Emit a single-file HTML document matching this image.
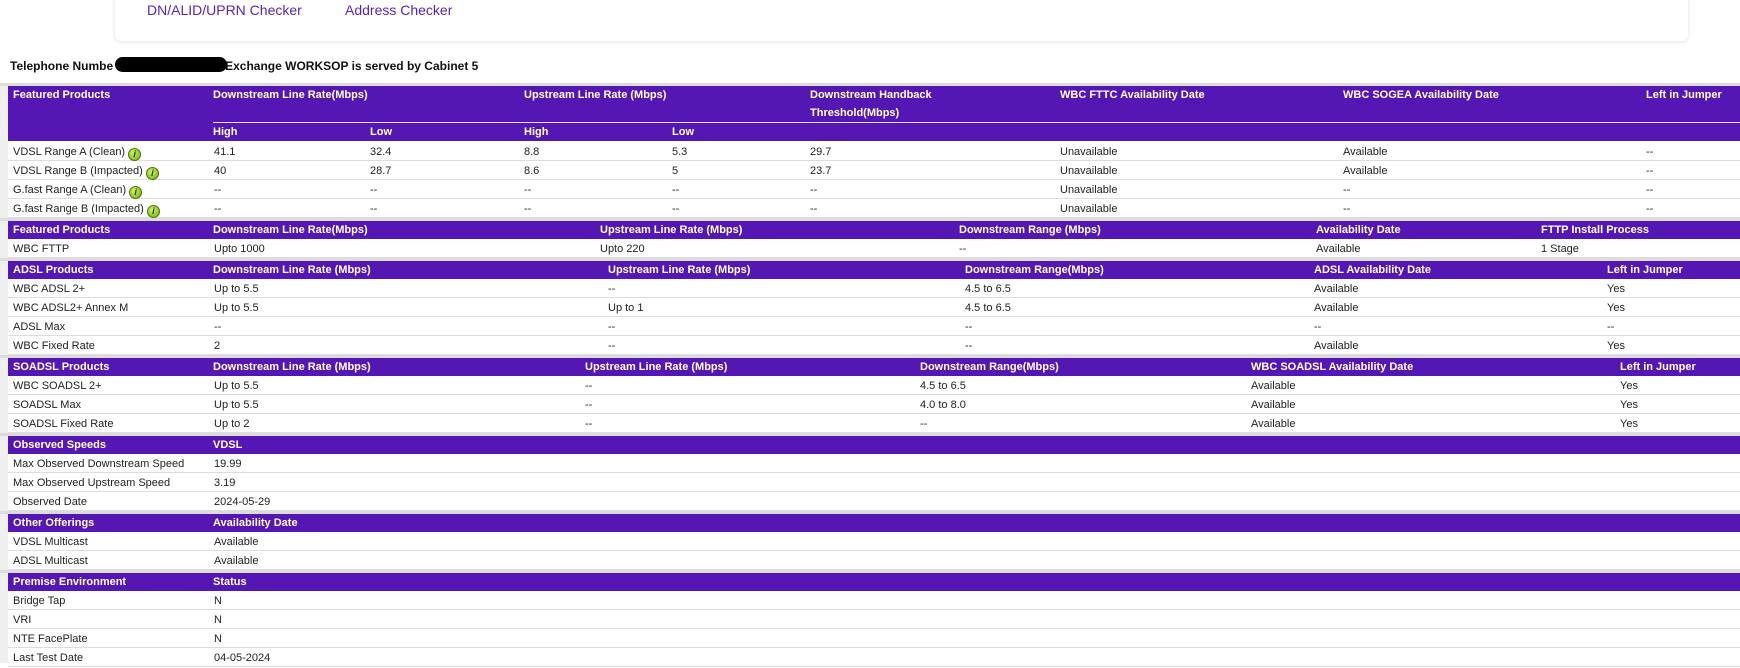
<!DOCTYPE html>
<html><head><meta charset="utf-8"><style>
*{margin:0;padding:0;box-sizing:border-box}
body{width:1740px;height:655px;overflow:hidden;background:#fff;font-family:"Liberation Sans",Arial,sans-serif;font-size:11px;color:#222;position:relative}
.card{position:absolute;left:115px;top:-10px;width:1573px;height:51px;background:#fff;border-radius:6px;box-shadow:0 1px 4px rgba(0,0,0,.12)}
.lnk{position:absolute;top:1px;font-size:14px;color:#5a1fc0;line-height:18px}
.tel{position:absolute;left:10px;top:58px;font-size:12px;font-weight:bold;color:#111;line-height:16px}
.blob{position:absolute;left:115px;top:57px;width:112px;height:15px;background:#000;border-radius:8px}
.strip{position:absolute;left:0;top:83px;width:8px;height:580px;background:#efefef}
.g{position:absolute;left:0;right:0;height:3px;background:#dcdcdc}
.r{position:absolute;left:8px;right:0;height:19px;background:#fff;border-bottom:1px solid #ddd}
.h{background:#5517b3;color:#fff;font-weight:bold;border-bottom:none;height:18px}
.r span{position:absolute;top:1px;line-height:19px;white-space:nowrap}
.h span{line-height:18px;top:0}
.i{display:inline-block;width:13px;height:13px;border-radius:50%;background:radial-gradient(circle at 40% 35%,#d8f060,#6aaa10);border:1px solid #3f7a0a;color:#1d3a00;font-size:9px;font-weight:bold;font-style:italic;text-align:center;line-height:11px;vertical-align:-2px;margin-left:3px}
</style></head><body>
<div class="card"><span class="lnk" style="left:32px;top:11px">DN/ALID/UPRN Checker</span><span class="lnk" style="left:230px;top:11px">Address Checker</span></div>
<div class="tel">Telephone Numbe<span style="display:inline-block;width:112px"></span>Exchange WORKSOP is served by Cabinet 5</div>
<div class="blob"></div>
<div class="strip"></div>

<div class="g" style="top:83px"></div>
<div class="r h" style="top:86px;height:55px">
<span style="left:5px;top:0">Featured Products</span>
<span style="left:205px">Downstream Line Rate(Mbps)</span>
<span style="left:516px">Upstream Line Rate (Mbps)</span>
<span style="left:802px">Downstream Handback</span>
<span style="left:802px;top:18px">Threshold(Mbps)</span>
<span style="left:1052px">WBC FTTC Availability Date</span>
<span style="left:1335px">WBC SOGEA Availability Date</span>
<span style="left:1638px">Left in Jumper</span>
<div style="position:absolute;left:205px;right:0;top:36px;height:1px;background:#ddd"></div>
<span style="left:205px;top:37px">High</span><span style="left:362px;top:37px">Low</span><span style="left:516px;top:37px">High</span><span style="left:664px;top:37px">Low</span>
</div>
<div class="r" style="top:142px"><span style="left:5px">VDSL Range A (Clean)<b class="i">i</b></span><span style="left:206px">41.1</span><span style="left:362px">32.4</span><span style="left:516px">8.8</span><span style="left:664px">5.3</span><span style="left:802px">29.7</span><span style="left:1052px">Unavailable</span><span style="left:1335px">Available</span><span style="left:1638px">--</span></div>
<div class="r" style="top:161px"><span style="left:5px">VDSL Range B (Impacted)<b class="i">i</b></span><span style="left:206px">40</span><span style="left:362px">28.7</span><span style="left:516px">8.6</span><span style="left:664px">5</span><span style="left:802px">23.7</span><span style="left:1052px">Unavailable</span><span style="left:1335px">Available</span><span style="left:1638px">--</span></div>
<div class="r" style="top:180px"><span style="left:5px">G.fast Range A (Clean)<b class="i">i</b></span><span style="left:206px">--</span><span style="left:362px">--</span><span style="left:516px">--</span><span style="left:664px">--</span><span style="left:802px">--</span><span style="left:1052px">Unavailable</span><span style="left:1335px">--</span><span style="left:1638px">--</span></div>
<div class="r" style="top:199px"><span style="left:5px">G.fast Range B (Impacted)<b class="i">i</b></span><span style="left:206px">--</span><span style="left:362px">--</span><span style="left:516px">--</span><span style="left:664px">--</span><span style="left:802px">--</span><span style="left:1052px">Unavailable</span><span style="left:1335px">--</span><span style="left:1638px">--</span></div>

<div class="g" style="top:218px"></div>
<div class="r h" style="top:221px"><span style="left:5px">Featured Products</span><span style="left:205px">Downstream Line Rate(Mbps)</span><span style="left:592px">Upstream Line Rate (Mbps)</span><span style="left:951px">Downstream Range (Mbps)</span><span style="left:1308px">Availability Date</span><span style="left:1533px">FTTP Install Process</span></div>
<div class="r" style="top:239px"><span style="left:5px">WBC FTTP</span><span style="left:206px">Upto 1000</span><span style="left:592px">Upto 220</span><span style="left:951px">--</span><span style="left:1308px">Available</span><span style="left:1533px">1 Stage</span></div>

<div class="g" style="top:258px"></div>
<div class="r h" style="top:261px"><span style="left:5px">ADSL Products</span><span style="left:205px">Downstream Line Rate (Mbps)</span><span style="left:600px">Upstream Line Rate (Mbps)</span><span style="left:957px">Downstream Range(Mbps)</span><span style="left:1306px">ADSL Availability Date</span><span style="left:1599px">Left in Jumper</span></div>
<div class="r" style="top:279px"><span style="left:5px">WBC ADSL 2+</span><span style="left:206px">Up to 5.5</span><span style="left:600px">--</span><span style="left:957px">4.5 to 6.5</span><span style="left:1306px">Available</span><span style="left:1599px">Yes</span></div>
<div class="r" style="top:298px"><span style="left:5px">WBC ADSL2+ Annex M</span><span style="left:206px">Up to 5.5</span><span style="left:600px">Up to 1</span><span style="left:957px">4.5 to 6.5</span><span style="left:1306px">Available</span><span style="left:1599px">Yes</span></div>
<div class="r" style="top:317px"><span style="left:5px">ADSL Max</span><span style="left:206px">--</span><span style="left:600px">--</span><span style="left:957px">--</span><span style="left:1306px">--</span><span style="left:1599px">--</span></div>
<div class="r" style="top:336px"><span style="left:5px">WBC Fixed Rate</span><span style="left:206px">2</span><span style="left:600px">--</span><span style="left:957px">--</span><span style="left:1306px">Available</span><span style="left:1599px">Yes</span></div>

<div class="g" style="top:355px"></div>
<div class="r h" style="top:358px"><span style="left:5px">SOADSL Products</span><span style="left:205px">Downstream Line Rate (Mbps)</span><span style="left:577px">Upstream Line Rate (Mbps)</span><span style="left:912px">Downstream Range(Mbps)</span><span style="left:1243px">WBC SOADSL Availability Date</span><span style="left:1612px">Left in Jumper</span></div>
<div class="r" style="top:376px"><span style="left:5px">WBC SOADSL 2+</span><span style="left:206px">Up to 5.5</span><span style="left:577px">--</span><span style="left:912px">4.5 to 6.5</span><span style="left:1243px">Available</span><span style="left:1612px">Yes</span></div>
<div class="r" style="top:395px"><span style="left:5px">SOADSL Max</span><span style="left:206px">Up to 5.5</span><span style="left:577px">--</span><span style="left:912px">4.0 to 8.0</span><span style="left:1243px">Available</span><span style="left:1612px">Yes</span></div>
<div class="r" style="top:414px"><span style="left:5px">SOADSL Fixed Rate</span><span style="left:206px">Up to 2</span><span style="left:577px">--</span><span style="left:912px">--</span><span style="left:1243px">Available</span><span style="left:1612px">Yes</span></div>

<div class="g" style="top:433px"></div>
<div class="r h" style="top:436px"><span style="left:5px">Observed Speeds</span><span style="left:205px">VDSL</span></div>
<div class="r" style="top:454px"><span style="left:5px">Max Observed Downstream Speed</span><span style="left:206px">19.99</span></div>
<div class="r" style="top:473px"><span style="left:5px">Max Observed Upstream Speed</span><span style="left:206px">3.19</span></div>
<div class="r" style="top:492px"><span style="left:5px">Observed Date</span><span style="left:206px">2024-05-29</span></div>

<div class="g" style="top:511px"></div>
<div class="r h" style="top:514px"><span style="left:5px">Other Offerings</span><span style="left:205px">Availability Date</span></div>
<div class="r" style="top:532px"><span style="left:5px">VDSL Multicast</span><span style="left:206px">Available</span></div>
<div class="r" style="top:551px"><span style="left:5px">ADSL Multicast</span><span style="left:206px">Available</span></div>

<div class="g" style="top:570px"></div>
<div class="r h" style="top:573px"><span style="left:5px">Premise Environment</span><span style="left:205px">Status</span></div>
<div class="r" style="top:591px"><span style="left:5px">Bridge Tap</span><span style="left:206px">N</span></div>
<div class="r" style="top:610px"><span style="left:5px">VRI</span><span style="left:206px">N</span></div>
<div class="r" style="top:629px"><span style="left:5px">NTE FacePlate</span><span style="left:206px">N</span></div>
<div class="r" style="top:648px"><span style="left:5px">Last Test Date</span><span style="left:206px">04-05-2024</span></div>
</body></html>
